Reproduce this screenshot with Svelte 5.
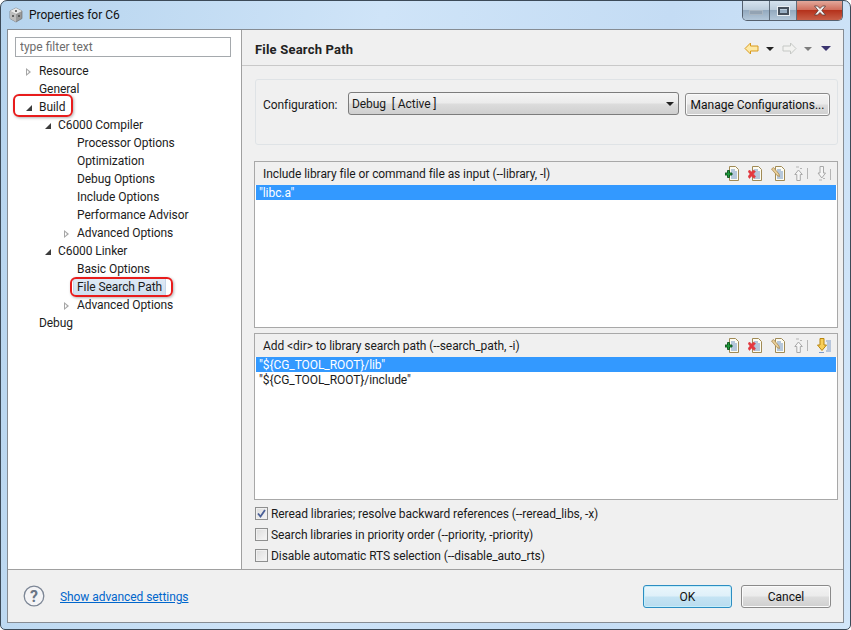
<script>
  const tree = [
    { label: 'Resource', level: 0, arrow: 'closed' },
    { label: 'General', level: 0 },
    { label: 'Build', level: 0, arrow: 'open', mark: true },
    { label: 'C6000 Compiler', level: 1, arrow: 'open' },
    { label: 'Processor Options', level: 2 },
    { label: 'Optimization', level: 2 },
    { label: 'Debug Options', level: 2 },
    { label: 'Include Options', level: 2 },
    { label: 'Performance Advisor', level: 2 },
    { label: 'Advanced Options', level: 2, arrow: 'closed' },
    { label: 'C6000 Linker', level: 1, arrow: 'open' },
    { label: 'Basic Options', level: 2 },
    { label: 'File Search Path', level: 2, selected: true, mark: true },
    { label: 'Advanced Options', level: 2, arrow: 'closed' },
    { label: 'Debug', level: 0 },
  ];

  const panels = [
    {
      title: 'Include library file or command file as input (--library, -l)',
      items: ['"libc.a"'],
      downEnabled: false,
    },
    {
      title: 'Add <dir> to library search path (--search_path, -i)',
      items: ['"${CG_TOOL_ROOT}/lib"', '"${CG_TOOL_ROOT}/include"'],
      downEnabled: true,
    },
  ];

  const options = [
    { label: 'Reread libraries; resolve backward references (--reread_libs, -x)', checked: true },
    { label: 'Search libraries in priority order (--priority, -priority)', checked: false },
    { label: 'Disable automatic RTS selection (--disable_auto_rts)', checked: false },
  ];
</script>

{#snippet doc()}
  <path d="M4.500 .500h6l3 3v11h-9z" fill="#fdfcf2" stroke="#a08a55" />
  <path d="M6 4h4M6 6h6M6 8h6M6 10h6M6 12h6" stroke="#6f93c4" />
{/snippet}

{#snippet toolbar(downEnabled)}
  <div class="tools">
    <svg width="16" height="16" viewBox="0 0 16 16">
      {@render doc()}
      <path d="M2.500 4.500h2v2.500H7v2H4.500v2.500h-2V9H0V7h2.500z" fill="#1c9c3a" stroke="#0b4f1a" stroke-width=".9" />
    </svg>
    <svg width="16" height="16" viewBox="0 0 16 16">
      {@render doc()}
      <path d="M0 5.500 1.500 4 3.500 6l2-2L7.500 5.500l-2 2.500 2 2.500L6 12.500l-2.500-2.500-2 2.500L0 10.500 2 8z" fill="#e5383f" stroke="#d83a40" stroke-width=".5" />
    </svg>
    <svg width="16" height="16" viewBox="0 0 16 16">
      {@render doc()}
      <path d="M.5 3l2-1.500 5.500 6.500.5 2.500-2.500-1z" fill="#e9cf98" stroke="#a98a55" stroke-width=".8" />
    </svg>
    <svg width="16" height="16" viewBox="0 0 16 16">
      <path d="M4.500 4 .8 8.500h2v6h3.500v-6h2z" fill="#f6f6f6" stroke="#a8a8a8" />
      <path d="M2 1h3M6 2.500h2" stroke="#b5b5b5" />
      <path d="M13.500 2v11" stroke="#b5b5b5" />
    </svg>
    {#if downEnabled}
      <svg width="16" height="16" viewBox="0 0 16 16">
        <path d="M9 3h5M10 5h4M10 7h4M10 9h4M10 11h4M9 13h5" stroke="#7f9cc8" />
        <path d="M3 .500h4V7h2.500L5 12.500.5 7H3z" fill="#f9cf5a" stroke="#b9860f" />
        <path d="M2 14.500h5" stroke="#7f9cc8" />
      </svg>
    {:else}
      <svg width="16" height="16" viewBox="0 0 16 16">
        <path d="M3 .500h3.500V7h2L4.800 12 1 7h2z" fill="#f6f6f6" stroke="#a8a8a8" />
        <path d="M2 14h3M6 12.500h2" stroke="#b5b5b5" />
        <path d="M13.500 3v11" stroke="#b5b5b5" />
      </svg>
    {/if}
  </div>
{/snippet}

<div class="window">
  <header class="titlebar">
    <svg class="app-icon" width="16" height="16" viewBox="0 0 16 16">
      <path d="M8 1l6 3v7.500L8 15l-6-3.500V4z" fill="#9a9a9a" stroke="#666" stroke-width=".6" />
      <path d="M8 1l6 3-6 3-6-3z" fill="#e8e8e8" />
      <path d="M8 7v8l-6-3.500V4z" fill="#bdbdbd" />
      <circle cx="8" cy="4" r="1" fill="#444" />
      <circle cx="5" cy="9" r="1" fill="#444" />
      <circle cx="11" cy="9" r="1" fill="#444" />
    </svg>
    <span class="title">Properties for C6</span>
    <div class="controls">
      <div class="ctl min"><span></span></div>
      <div class="ctl max"><span></span></div>
      <div class="ctl close">
        <svg width="14" height="11" viewBox="0 0 14 11">
          <path d="M1.500 1h3l2.500 2.500L9.500 1h3L8.800 5.500l3.700 4.500h-3L7 7.500 4.500 10h-3l3.700-4.500z" fill="#f2f2f2" stroke="#5c3a36" stroke-width=".8" />
        </svg>
      </div>
    </div>
  </header>

  <div class="client">
    <div class="main">
      <aside class="sidebar">
        <input class="filter" placeholder="type filter text" />
        <ul class="tree">
          {#each tree as node}
            <li class="node level-{node.level}">
              {#if node.arrow === 'open'}
                <span class="arrow open"></span>
              {:else if node.arrow === 'closed'}
                <span class="arrow closed"></span>
              {:else}
                <span class="arrow"></span>
              {/if}
              <span class="label" class:selected={node.selected}>{node.label}</span>
              {#if node.mark}
                <span class="mark" class:mark-sel={node.selected}></span>
              {/if}
            </li>
          {/each}
        </ul>
      </aside>

      <section class="content">
        <div class="page-head">
          <h1>File Search Path</h1>
          <div class="nav">
            <svg width="15" height="13" viewBox="0 0 15 13">
              <path d="M6.500 1 1 6.500 6.500 12V9H14V4H6.500z" fill="#fde9a6" stroke="#d99a1c" />
            </svg>
            <i class="drop dark"></i>
            <svg class="fwd" width="15" height="13" viewBox="0 0 15 13">
              <path d="M8.500 1 14 6.500 8.500 12V9H1V4h7.500z" fill="#f2f2f0" stroke="#c5c8c5" />
            </svg>
            <i class="drop grey"></i>
            <i class="drop navy"></i>
          </div>
        </div>

        <div class="body">
          <div class="config">
            <span class="config-label">Configuration:</span>
            <div class="combo">
              <span>Debug&nbsp; [ Active ]</span>
              <i class="drop dark"></i>
            </div>
            <button class="btn manage">Manage Configurations...</button>
          </div>

          {#each panels as panel}
            <div class="panel">
              <div class="panel-head">
                <span>{panel.title}</span>
                {@render toolbar(panel.downEnabled)}
              </div>
              <ul class="list">
                {#each panel.items as item, i}
                  <li class:active={i === 0}>{item}</li>
                {/each}
              </ul>
            </div>
          {/each}

          <div class="options">
            {#each options as opt}
              <label class="option">
                <span class="check">
                  {#if opt.checked}
                    <svg width="9" height="9" viewBox="0 0 9 9">
                      <path d="M1 4.500 3.500 7.500 8 1" fill="none" stroke="#4a5f97" stroke-width="1.800" />
                    </svg>
                  {/if}
                </span>
                {opt.label}
              </label>
            {/each}
          </div>
        </div>
      </section>
    </div>

    <footer class="footer">
      <svg width="22" height="22" viewBox="0 0 22 22">
        <circle cx="11" cy="11" r="9.800" fill="#f4f4f6" stroke="#7d8796" stroke-width="1.300" />
        <text x="11" y="16.500" text-anchor="middle" class="q">?</text>
      </svg>
      <a class="link" href="#advanced">Show advanced settings</a>
      <div class="actions">
        <button class="btn ok">OK</button>
        <button class="btn cancel">Cancel</button>
      </div>
    </footer>
  </div>
</div>

<style>
  :global(body) {
    margin: 0;
    background: #fff;
  }

  .window {
    position: relative;
    box-sizing: border-box;
    width: 851px;
    height: 630px;
    padding: 0 6px 6px;
    display: flex;
    flex-direction: column;
    border: 1px solid #3c4a58;
    border-radius: 7px 7px 5px 5px;
    background: linear-gradient(100deg, #b6d4ee 0%, #cfe4f8 40%, #c4dcf4 70%, #d2e6f9 100%);
    font-family: Roboto, 'Liberation Sans', sans-serif;
    font-size: 12px;
    letter-spacing: -0.07px;
    color: #1a1a1a;
    overflow: hidden;
  }

  .titlebar {
    flex: none;
    height: 28px;
    display: flex;
    align-items: center;
    gap: 5px;
    padding-bottom: 1px;
    box-sizing: border-box;
  }

  .app-icon {
    margin-left: 1px;
  }

  .title {
    font-size: 12px;
    letter-spacing: 0;
    color: #111;
  }

  .controls {
    margin-left: auto;
    margin-right: 1px;
    align-self: flex-start;
    display: flex;
    height: 19px;
    border: 1px solid #55606e;
    border-top: 0;
    border-radius: 0 0 5px 5px;
    overflow: hidden;
  }

  .ctl {
    box-sizing: border-box;
    display: flex;
    align-items: center;
    justify-content: center;
    height: 100%;
  }

  .min,
  .max {
    width: 27px;
    background: linear-gradient(#d5e2ee 0%, #bccddc 45%, #94aabf 50%, #b3c7d9 100%);
    border-right: 1px solid #5f6d7b;
  }

  .min span {
    width: 12px;
    height: 3px;
    margin-top: 3px;
    background: #93a3b3;
    border: 1px solid #a9b6c2;
  }

  .max span {
    width: 7px;
    height: 4px;
    border: 2px solid #46505c;
    outline: 1px solid #e8eef3;
  }

  .close {
    width: 45px;
    background: linear-gradient(#e2a89b 0%, #d0705e 45%, #b5321c 50%, #c85f48 100%);
  }

  .client {
    flex: 1;
    display: flex;
    flex-direction: column;
    border: 1px solid #868c93;
    background: #f0f0f0;
    min-height: 0;
  }

  .main {
    flex: 1;
    display: flex;
    min-height: 0;
    border-bottom: 1px solid #a0a0a0;
  }

  .sidebar {
    flex: none;
    width: 234px;
    box-sizing: border-box;
    background: #fff;
    border-right: 1px solid #a0a0a0;
    padding: 7px 0 0 7px;
  }

  .filter {
    display: block;
    box-sizing: border-box;
    width: 216px;
    height: 20px;
    padding: 0 4px;
    border: 1px solid #a5a9ad;
    font: inherit;
    outline: none;
  }

  .filter::placeholder {
    color: #6d6d6d;
    opacity: 1;
  }

  .tree {
    list-style: none;
    margin: 5px 0 0;
    padding: 0;
  }

  .node {
    position: relative;
    height: 18px;
    display: flex;
    align-items: center;
    color: #1c1c1c;
  }

  .level-0 {
    padding-left: 8px;
  }

  .level-1 {
    padding-left: 27px;
  }

  .level-2 {
    padding-left: 46px;
  }

  .arrow {
    flex: none;
    width: 11px;
    height: 9px;
    margin-right: 5px;
    position: relative;
  }

  .arrow.closed::before {
    content: '';
    position: absolute;
    left: 3px;
    top: 1px;
    border-left: 5px solid #a6a6a6;
    border-top: 4px solid transparent;
    border-bottom: 4px solid transparent;
  }

  .arrow.closed::after {
    content: '';
    position: absolute;
    left: 4px;
    top: 3px;
    border-left: 2px solid #fff;
    border-top: 2px solid transparent;
    border-bottom: 2px solid transparent;
  }

  .arrow.open::before {
    content: '';
    position: absolute;
    left: 3px;
    top: 2px;
    border-bottom: 6px solid #3c3c3c;
    border-left: 6px solid transparent;
  }

  .label {
    padding: 0 2px 0 0;
    line-height: 18px;
  }

  .label.selected {
    background: linear-gradient(#dfe9f5, #cfdff0);
    outline: 1px solid #c6d6e8;
    padding: 1px 3px 0 3px;
    margin-left: -3px;
    line-height: 15px;
  }

  .mark {
    position: absolute;
    left: -2px;
    top: -4px;
    width: 56px;
    height: 19px;
    border: 2px solid #e81c1c;
    border-radius: 6px;
    box-shadow: 1px 1px 3px rgba(0, 0, 0, 0.3);
    pointer-events: none;
  }

  .mark-sel {
    left: 55px;
    top: -1px;
    width: 99px;
    height: 16px;
  }

  .content {
    flex: 1;
    min-width: 0;
    display: flex;
    flex-direction: column;
  }

  .page-head {
    flex: none;
    height: 36px;
    box-sizing: border-box;
    display: flex;
    align-items: center;
    padding: 2px 12px 0 13px;
    border-bottom: 1px solid #c9c9c9;
    background: #f0f0f0;
  }

  h1 {
    margin: 1px 0 0;
    font-size: 13px;
    font-weight: 700;
    letter-spacing: 0.2px;
    color: #222;
  }

  .nav {
    margin-left: auto;
    display: flex;
    align-items: center;
  }

  .drop {
    display: inline-block;
    width: 0;
    height: 0;
    border-left: 4px solid transparent;
    border-right: 4px solid transparent;
    border-top: 4px solid #222;
  }

  .nav .dark {
    margin: 0 0 0 7px;
  }

  .nav .fwd {
    margin-left: 8px;
  }

  .nav .grey {
    margin-left: 7px;
    border-top-color: #7d7d7d;
  }

  .nav .navy {
    margin-left: 9px;
    border-top-color: #3b3570;
    border-left-width: 5px;
    border-right-width: 5px;
    border-top-width: 5px;
  }

  .body {
    flex: 1;
    padding: 13px 4px 0 12px;
    min-height: 0;
  }

  .config {
    box-sizing: border-box;
    width: 583px;
    height: 66px;
    margin-left: 1px;
    padding: 12px 0 0 7px;
    display: flex;
    align-items: flex-start;
    border: 1px solid #dfe3e6;
    border-radius: 3px;
  }

  .config-label {
    flex: none;
    width: 85px;
    margin-top: 6px;
  }

  .combo {
    box-sizing: border-box;
    width: 331px;
    height: 23px;
    padding: 0 4px 0 3px;
    display: flex;
    align-items: center;
    justify-content: space-between;
    border: 1px solid #7c7c7c;
    border-radius: 3px;
    background: linear-gradient(#f4f4f4 0%, #ebebeb 48%, #dcdcdc 52%, #cfcfcf 100%);
  }

  .btn {
    box-sizing: border-box;
    height: 23px;
    padding: 0;
    font: inherit;
    color: #111;
    border: 1px solid #8a8a8a;
    border-radius: 3px;
    background: linear-gradient(#f3f3f3 0%, #ebebeb 48%, #dddddd 52%, #cfcfcf 100%);
    box-shadow: inset 0 0 0 1px #fbfbfb;
  }

  .manage {
    width: 145px;
    margin: 1px 0 0 6px;
  }

  .panel {
    box-sizing: border-box;
    width: 584px;
    height: 167px;
    margin-top: 16px;
    border: 1px solid #a8a8a8;
    display: flex;
    flex-direction: column;
    background: #fff;
  }

  .panel + .panel {
    margin-top: 5px;
  }

  .panel-head {
    flex: none;
    height: 23px;
    display: flex;
    align-items: center;
    padding: 0 4px 0 8px;
    background: #f0f0f0;
  }

  .tools {
    margin-left: auto;
    display: flex;
    gap: 7px;
  }

  .list {
    list-style: none;
    margin: 0;
    padding: 0 1px;
    background: #fff;
  }

  .list li {
    box-sizing: border-box;
    height: 15px;
    padding: 1px 0 0 3px;
    line-height: 14px;
    color: #1c1c1c;
  }

  .list li.active {
    background: #3399ff;
    color: #fff;
  }

  .options {
    margin-top: 3px;
    margin-left: 1px;
  }

  .option {
    height: 21px;
    display: flex;
    align-items: center;
    gap: 3px;
  }

  .check {
    flex: none;
    box-sizing: border-box;
    width: 13px;
    height: 13px;
    display: flex;
    align-items: center;
    justify-content: center;
    border: 1px solid #8e8f8f;
    background: linear-gradient(135deg, #dcdcdc, #f6f6f6);
    box-shadow: inset 0 0 0 1px #f0f0f0;
  }

  .footer {
    flex: none;
    height: 52px;
    display: flex;
    align-items: center;
    padding: 0 12px 0 15px;
  }

  .q {
    font-size: 16px;
    font-weight: 700;
    fill: #6b7686;
  }

  .link {
    margin: 2px 0 0 15px;
    color: #0066cc;
    text-decoration: underline;
  }

  .actions {
    margin-left: auto;
    display: flex;
    gap: 9px;
  }

  .ok,
  .cancel {
    padding-top: 1px;
  }

  .ok {
    width: 89px;
    border-color: #2c8dc2;
    background: linear-gradient(#eaf6fc 0%, #dff0f9 48%, #c4e3f3 52%, #b9dcef 100%);
    box-shadow: inset 0 0 0 1px #c4eefa;
  }

  .cancel {
    width: 90px;
  }
</style>
